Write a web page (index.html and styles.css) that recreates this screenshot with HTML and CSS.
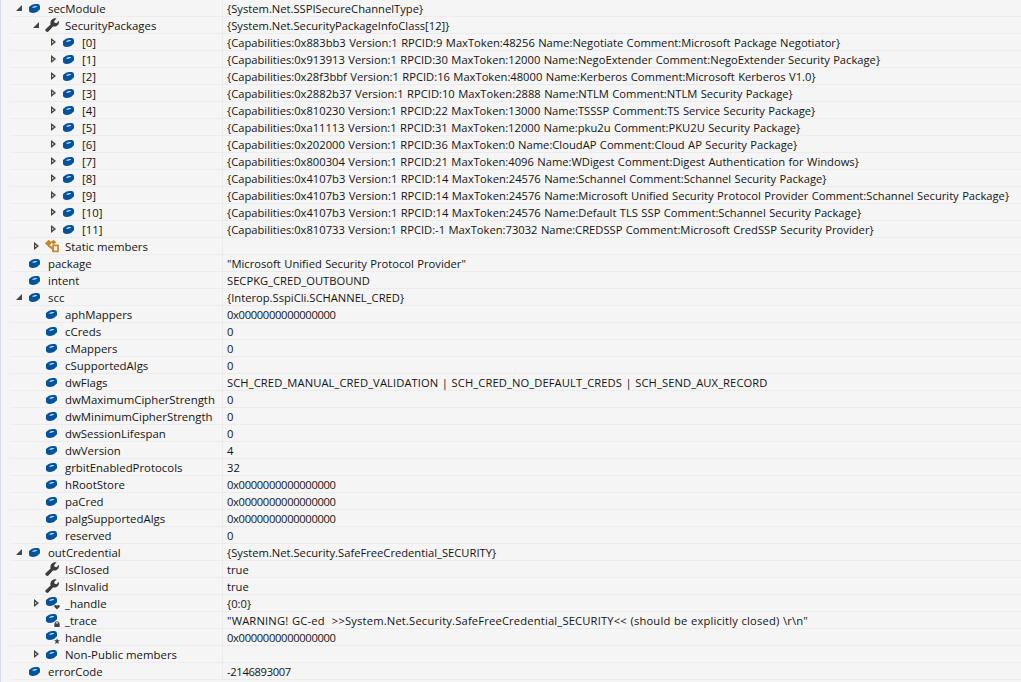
FILE: index.html
```html
<!DOCTYPE html>
<html lang="en">
<head>
<meta charset="utf-8">
<title>Locals</title>
<link rel="stylesheet" href="styles.css">
</head>
<body>
<svg class="defs" width="0" height="0" aria-hidden="true">
  <symbol id="cube" viewBox="0 0 11 9">
    <path d="M0 3 L3 0.8 Q6 -0.3 8.8 0.1 Q11 0.6 11 2.4 L11 5.2 L8 7.9 Q4.6 9.3 2 8.8 Q0 8.3 0 6.5 Z" fill="#00539c"/>
    <path d="M3.4 3.1 Q5.2 1.9 7.4 1.9 Q8.4 2 7.8 2.7 Q6 3.8 4 3.8 Q3 3.7 3.4 3.1 Z" fill="#dfe9f4"/>
  </symbol>
  <symbol id="wrench" viewBox="0 0 14 14">
    <path d="M0.6 11.2 L5.6 6.6 C5 4.4 5.6 2.4 7.2 1.2 C8.6 0.2 10.2 0 11.6 0.5 L9.2 2.9 L9.6 4.8 L11.5 5.2 L13.7 2.8 C14.2 4.4 13.8 6.2 12.6 7.3 C11.2 8.6 9.6 8.8 8 8.4 L3.4 13.4 C2.6 14.1 1.7 14 1 13.3 C0.2 12.6 0 11.8 0.6 11.2 Z" fill="#3c3c3c"/>
  </symbol>
  <symbol id="static" viewBox="0 0 14 14">
    <path d="M0 4.4 L3.6 0.8 L7 3.8 L3.4 7.4 Z" fill="#c8862b"/>
    <path d="M5.5 3 L8.5 1 L11.4 3.2 L8.6 5.4 Z" fill="#c8862b"/>
    <path d="M3.5 5.5 L9 9 L9 12 L3 7.5 Z" fill="#c8862b"/>
    <rect x="8" y="6.4" width="5" height="6" fill="none" stroke="#c8862b" stroke-width="1.7"/>
  </symbol>
  <symbol id="heart" viewBox="0 0 7 6">
    <path d="M3.5 6 L0.3 2.6 C-0.3 1 1.8 -0.4 3.5 1.3 C5.2 -0.4 7.3 1 6.7 2.6 Z" fill="#424242"/>
  </symbol>
  <symbol id="lock" viewBox="0 0 7 7">
    <path d="M1 3 L1 2 C1 0.2 6 0.2 6 2 L6 3 L6.6 3 L6.6 7 L0.4 7 L0.4 3 Z M2.2 3 L4.8 3 L4.8 2.1 C4.8 1.2 2.2 1.2 2.2 2.1 Z" fill="#424242" fill-rule="evenodd"/>
  </symbol>
  <symbol id="star" viewBox="0 0 7 7">
    <path d="M3.5 0 L4.4 2.5 L7 2.6 L5 4.2 L5.7 7 L3.5 5.4 L1.3 7 L2 4.2 L0 2.6 L2.6 2.5 Z" fill="#424242"/>
  </symbol>
</svg>
<main class="grid">
<div class="row l0"><span class="name"><i class="exp open"></i><svg class="ico"><use href="#cube"/></svg><span class="lbl">secModule</span></span><span class="val">{System.Net.SSPISecureChannelType}</span></div>
<div class="row l1"><span class="name"><i class="exp open"></i><svg class="ico wr"><use href="#wrench"/></svg><span class="lbl">SecurityPackages</span></span><span class="val">{System.Net.SecurityPackageInfoClass[12]}</span></div>
<div class="row l2"><span class="name"><i class="exp"></i><svg class="ico"><use href="#cube"/></svg><span class="lbl">[0]</span></span><span class="val">{Capabilities:0x883bb3 Version:1 RPCID:9 MaxToken:48256 Name:Negotiate Comment:Microsoft Package Negotiator}</span></div>
<div class="row l2"><span class="name"><i class="exp"></i><svg class="ico"><use href="#cube"/></svg><span class="lbl">[1]</span></span><span class="val">{Capabilities:0x913913 Version:1 RPCID:30 MaxToken:12000 Name:NegoExtender Comment:NegoExtender Security Package}</span></div>
<div class="row l2"><span class="name"><i class="exp"></i><svg class="ico"><use href="#cube"/></svg><span class="lbl">[2]</span></span><span class="val">{Capabilities:0x28f3bbf Version:1 RPCID:16 MaxToken:48000 Name:Kerberos Comment:Microsoft Kerberos V1.0}</span></div>
<div class="row l2"><span class="name"><i class="exp"></i><svg class="ico"><use href="#cube"/></svg><span class="lbl">[3]</span></span><span class="val">{Capabilities:0x2882b37 Version:1 RPCID:10 MaxToken:2888 Name:NTLM Comment:NTLM Security Package}</span></div>
<div class="row l2"><span class="name"><i class="exp"></i><svg class="ico"><use href="#cube"/></svg><span class="lbl">[4]</span></span><span class="val">{Capabilities:0x810230 Version:1 RPCID:22 MaxToken:13000 Name:TSSSP Comment:TS Service Security Package}</span></div>
<div class="row l2"><span class="name"><i class="exp"></i><svg class="ico"><use href="#cube"/></svg><span class="lbl">[5]</span></span><span class="val">{Capabilities:0xa11113 Version:1 RPCID:31 MaxToken:12000 Name:pku2u Comment:PKU2U Security Package}</span></div>
<div class="row l2"><span class="name"><i class="exp"></i><svg class="ico"><use href="#cube"/></svg><span class="lbl">[6]</span></span><span class="val">{Capabilities:0x202000 Version:1 RPCID:36 MaxToken:0 Name:CloudAP Comment:Cloud AP Security Package}</span></div>
<div class="row l2"><span class="name"><i class="exp"></i><svg class="ico"><use href="#cube"/></svg><span class="lbl">[7]</span></span><span class="val">{Capabilities:0x800304 Version:1 RPCID:21 MaxToken:4096 Name:WDigest Comment:Digest Authentication for Windows}</span></div>
<div class="row l2"><span class="name"><i class="exp"></i><svg class="ico"><use href="#cube"/></svg><span class="lbl">[8]</span></span><span class="val">{Capabilities:0x4107b3 Version:1 RPCID:14 MaxToken:24576 Name:Schannel Comment:Schannel Security Package}</span></div>
<div class="row l2"><span class="name"><i class="exp"></i><svg class="ico"><use href="#cube"/></svg><span class="lbl">[9]</span></span><span class="val">{Capabilities:0x4107b3 Version:1 RPCID:14 MaxToken:24576 Name:Microsoft Unified Security Protocol Provider Comment:Schannel Security Package}</span></div>
<div class="row l2"><span class="name"><i class="exp"></i><svg class="ico"><use href="#cube"/></svg><span class="lbl">[10]</span></span><span class="val">{Capabilities:0x4107b3 Version:1 RPCID:14 MaxToken:24576 Name:Default TLS SSP Comment:Schannel Security Package}</span></div>
<div class="row l2"><span class="name"><i class="exp"></i><svg class="ico"><use href="#cube"/></svg><span class="lbl">[11]</span></span><span class="val">{Capabilities:0x810733 Version:1 RPCID:-1 MaxToken:73032 Name:CREDSSP Comment:Microsoft CredSSP Security Provider}</span></div>
<div class="row l1"><span class="name"><i class="exp"></i><svg class="ico wr"><use href="#static"/></svg><span class="lbl">Static members</span></span><span class="val"></span></div>
<div class="row l0"><span class="name"><i class="exp none"></i><svg class="ico"><use href="#cube"/></svg><span class="lbl">package</span></span><span class="val">"Microsoft Unified Security Protocol Provider"</span></div>
<div class="row l0"><span class="name"><i class="exp none"></i><svg class="ico"><use href="#cube"/></svg><span class="lbl">intent</span></span><span class="val">SECPKG_CRED_OUTBOUND</span></div>
<div class="row l0"><span class="name"><i class="exp open"></i><svg class="ico"><use href="#cube"/></svg><span class="lbl">scc</span></span><span class="val">{Interop.SspiCli.SCHANNEL_CRED}</span></div>
<div class="row l1"><span class="name"><i class="exp none"></i><svg class="ico"><use href="#cube"/></svg><span class="lbl">aphMappers</span></span><span class="val num">0x0000000000000000</span></div>
<div class="row l1"><span class="name"><i class="exp none"></i><svg class="ico"><use href="#cube"/></svg><span class="lbl">cCreds</span></span><span class="val">0</span></div>
<div class="row l1"><span class="name"><i class="exp none"></i><svg class="ico"><use href="#cube"/></svg><span class="lbl">cMappers</span></span><span class="val">0</span></div>
<div class="row l1"><span class="name"><i class="exp none"></i><svg class="ico"><use href="#cube"/></svg><span class="lbl">cSupportedAlgs</span></span><span class="val">0</span></div>
<div class="row l1"><span class="name"><i class="exp none"></i><svg class="ico"><use href="#cube"/></svg><span class="lbl">dwFlags</span></span><span class="val flags">SCH_CRED_MANUAL_CRED_VALIDATION | SCH_CRED_NO_DEFAULT_CREDS | SCH_SEND_AUX_RECORD</span></div>
<div class="row l1"><span class="name"><i class="exp none"></i><svg class="ico"><use href="#cube"/></svg><span class="lbl">dwMaximumCipherStrength</span></span><span class="val">0</span></div>
<div class="row l1"><span class="name"><i class="exp none"></i><svg class="ico"><use href="#cube"/></svg><span class="lbl">dwMinimumCipherStrength</span></span><span class="val">0</span></div>
<div class="row l1"><span class="name"><i class="exp none"></i><svg class="ico"><use href="#cube"/></svg><span class="lbl">dwSessionLifespan</span></span><span class="val">0</span></div>
<div class="row l1"><span class="name"><i class="exp none"></i><svg class="ico"><use href="#cube"/></svg><span class="lbl">dwVersion</span></span><span class="val">4</span></div>
<div class="row l1"><span class="name"><i class="exp none"></i><svg class="ico"><use href="#cube"/></svg><span class="lbl">grbitEnabledProtocols</span></span><span class="val">32</span></div>
<div class="row l1"><span class="name"><i class="exp none"></i><svg class="ico"><use href="#cube"/></svg><span class="lbl">hRootStore</span></span><span class="val num">0x0000000000000000</span></div>
<div class="row l1"><span class="name"><i class="exp none"></i><svg class="ico"><use href="#cube"/></svg><span class="lbl">paCred</span></span><span class="val num">0x0000000000000000</span></div>
<div class="row l1"><span class="name"><i class="exp none"></i><svg class="ico"><use href="#cube"/></svg><span class="lbl">palgSupportedAlgs</span></span><span class="val num">0x0000000000000000</span></div>
<div class="row l1"><span class="name"><i class="exp none"></i><svg class="ico"><use href="#cube"/></svg><span class="lbl">reserved</span></span><span class="val">0</span></div>
<div class="row l0"><span class="name"><i class="exp open"></i><svg class="ico"><use href="#cube"/></svg><span class="lbl">outCredential</span></span><span class="val">{System.Net.Security.SafeFreeCredential_SECURITY}</span></div>
<div class="row l1"><span class="name"><i class="exp none"></i><svg class="ico wr"><use href="#wrench"/></svg><span class="lbl">IsClosed</span></span><span class="val">true</span></div>
<div class="row l1"><span class="name"><i class="exp none"></i><svg class="ico wr"><use href="#wrench"/></svg><span class="lbl">IsInvalid</span></span><span class="val">true</span></div>
<div class="row l1"><span class="name"><i class="exp"></i><span class="stack"><svg class="ico"><use href="#cube"/></svg><svg class="badge"><use href="#heart"/></svg></span><span class="lbl">_handle</span></span><span class="val">{0:0}</span></div>
<div class="row l1"><span class="name"><i class="exp none"></i><span class="stack"><svg class="ico"><use href="#cube"/></svg><svg class="badge"><use href="#lock"/></svg></span><span class="lbl">_trace</span></span><span class="val trace">"WARNING! GC-ed  &gt;&gt;System.Net.Security.SafeFreeCredential_SECURITY&lt;&lt; (should be explicitly closed) \r\n"</span></div>
<div class="row l1"><span class="name"><i class="exp none"></i><span class="stack"><svg class="ico"><use href="#cube"/></svg><svg class="badge"><use href="#star"/></svg></span><span class="lbl">handle</span></span><span class="val num">0x0000000000000000</span></div>
<div class="row l1"><span class="name"><i class="exp"></i><svg class="ico"><use href="#cube"/></svg><span class="lbl">Non-Public members</span></span><span class="val"></span></div>
<div class="row l0"><span class="name"><i class="exp none"></i><svg class="ico"><use href="#cube"/></svg><span class="lbl">errorCode</span></span><span class="val num">-2146893007</span></div>
</main>
</body>
</html>
```
FILE: styles.css
```css
html, body {
  margin: 0;
  padding: 0;
  height: 100%;
  overflow: hidden;
  background: #f5f5f5;
}
body {
  font-family: "Open Sans", "Liberation Sans", sans-serif;
  font-size: 11.2px;
  color: #141414;
  border-left: 1px solid #d6dbe9;
  box-sizing: border-box;
}
.defs { position: absolute; }
.grid { display: flex; flex-direction: column; }
.row {
  display: flex;
  height: 17px;
  box-sizing: border-box;
  margin-left: 9px;
  border-bottom: 1px solid #ececec;
  white-space: pre;
  line-height: 17px;
}
.name {
  display: flex;
  align-items: center;
  width: 212px;
  flex: none;
  border-right: 1px solid #ececec;
  box-sizing: content-box;
}
.l0 .name { padding-left: 6px; width: 206px; }
.l1 .name { padding-left: 23px; width: 189px; }
.l2 .name { padding-left: 40px; width: 172px; }
.val { padding-left: 4px; word-spacing: 0.5px; }
.val.num { letter-spacing: -0.33px; }
.val.flags { letter-spacing: 0.09px; }
.val.trace { letter-spacing: 0.17px; }
.exp { width: 13px; height: 16px; flex: none; position: relative; }
.exp::before {
  content: "";
  position: absolute;
  left: 1px;
  top: 4px;
  border-left: 5px solid #444;
  border-top: 4px solid transparent;
  border-bottom: 4px solid transparent;
}
.exp::after {
  content: "";
  position: absolute;
  left: 2px;
  top: 6.5px;
  border-left: 2px solid #f5f5f5;
  border-top: 1.5px solid transparent;
  border-bottom: 1.5px solid transparent;
}
.exp.open::before {
  left: 0;
  top: 5px;
  border-left: 6px solid transparent;
  border-top: 0;
  border-bottom: 6px solid #444;
}
.exp.open::after, .exp.none::before, .exp.none::after { display: none; }
.ico { width: 11px; height: 9px; flex: none; margin-right: 1px; }
.ico.wr { width: 14px; height: 14px; margin-left: -1px; margin-right: -1px; }
.stack { position: relative; width: 12px; height: 16px; flex: none; display: flex; align-items: center; }
.stack .ico { margin-top: -4px; }
.badge { position: absolute; left: 8px; top: 9px; width: 6px; height: 6px; }
.lbl { margin-left: 7px; font-size: 11.4px; }
```
